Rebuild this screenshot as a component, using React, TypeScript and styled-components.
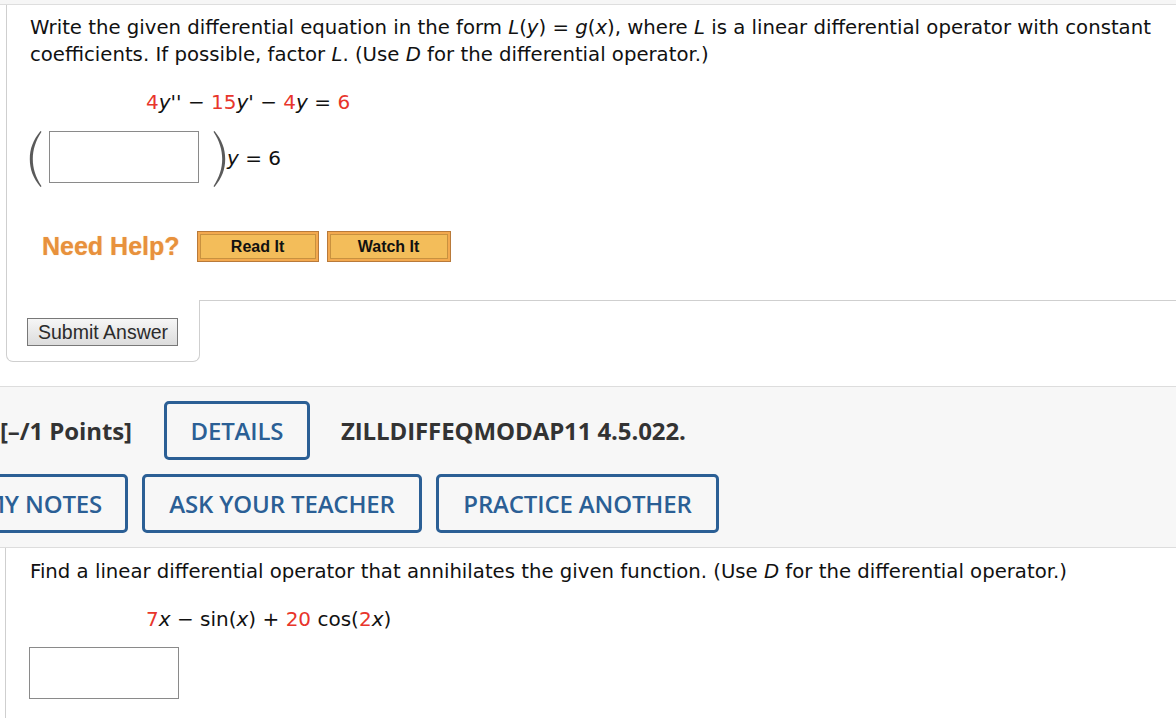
import React from "react";
import styled, { createGlobalStyle } from "styled-components";

const GlobalStyle = createGlobalStyle`
  html, body { margin: 0; padding: 0; background: #ffffff; }
  body { overflow: hidden; width: 1176px; height: 718px; }
  * { box-sizing: border-box; }
`;

const Page = styled.div`
  width: 1176px;
  height: 718px;
  overflow: hidden;
  font-family: "DejaVu Sans", Verdana, sans-serif;
  color: #111;
`;

const TopStrip = styled.div`
  height: 5px;
  background: #f6f6f6;
  border-bottom: 1px solid #dedede;
`;

const QuestionPanel = styled.div`
  margin-left: 6px;
`;

const QuestionBody = styled.div`
  border-left: 1px solid #cfcfcf;
  padding: 9px 0 38px 23px;
`;

const Prompt = styled.p`
  margin: 0;
  font-size: 19.7px;
  line-height: 27px;
`;

const Math = styled.div<{ $top: number }>`
  margin: ${(p) => p.$top}px 0 0 116px;
  font-size: 20px;
  line-height: 27px;
  white-space: pre;
`;

const Red = styled.span`
  color: #e8352b;
`;

const I = styled.i`
  font-style: italic;
`;

const AnswerRow = styled.div`
  display: flex;
  align-items: flex-start;
  height: 52px;
  margin-top: 15px;
  margin-left: -2px;
`;

const ParenSvg = styled.svg<{ $flip?: boolean; $ml?: number }>`
  width: 14px;
  height: 58px;
  margin-top: -1px;
  margin-left: ${(p) => p.$ml ?? 0}px;
  flex: none;
  transform: ${(p) => (p.$flip ? "scaleX(-1)" : "none")};
`;

const AnswerBox = styled.div<{ $ml: number; $mt?: number }>`
  width: 150px;
  height: 52px;
  margin-left: ${(p) => p.$ml}px;
  margin-top: ${(p) => p.$mt ?? 0}px;
  border: 1px solid #8a8a8a;
  background: #fff;
  flex: none;
`;

const AfterParen = styled.span`
  margin-top: 14px;
  font-size: 20px;
  line-height: 27px;
  white-space: pre;
`;

const HelpRow = styled.div`
  display: flex;
  align-items: center;
  margin-top: 48px;
  margin-left: 12px;
  height: 31px;
`;

const NeedHelp = styled.span`
  font-family: "Liberation Sans", Arial, sans-serif;
  font-weight: 700;
  font-size: 25px;
  color: #e8913c;
  text-shadow: 0 0 1px rgba(232, 145, 60, 0.6);
  margin-right: 17px;
`;

const HelpButton = styled.button<{ $w: number }>`
  width: ${(p) => p.$w}px;
  height: 31px;
  margin-right: 8px;
  padding: 0;
  border: 1px solid #b97a3a;
  background: #f0a64c;
  box-shadow: inset 0 0 0 2px #f3a94f, inset 0 0 0 3px #c8913f;
  display: flex;
  align-items: center;
  justify-content: center;
  position: relative;
  font-family: "Liberation Sans", Arial, sans-serif;
  font-weight: 700;
  font-size: 16px;
  color: #111;
  cursor: pointer;
  &::before {
    content: "";
    position: absolute;
    inset: 3px;
    background: #f3bd5a;
  }
  span { position: relative; }
`;

const Footer = styled.div`
  display: flex;
`;

const SubmitBox = styled.div`
  width: 194px;
  height: 62px;
  border: 1px solid #cfcfcf;
  border-top: none;
  border-radius: 0 0 7px 7px;
  padding: 18px 0 0 20px;
  flex: none;
`;

const Filler = styled.div`
  flex: 1;
  border-top: 1px solid #cfcfcf;
`;

const SubmitButton = styled.button`
  height: 28px;
  padding: 0 9px 0 10px;
  border: 1px solid #787878;
  background: linear-gradient(#f6f6f6, #dcdcdc);
  font-family: "Liberation Sans", Arial, sans-serif;
  font-size: 19.5px;
  color: #2b2b2b;
  line-height: 26px;
  cursor: pointer;
`;

const GraySection = styled.div`
  margin-top: 24px;
  background: #f7f7f7;
  border-top: 1px solid #dddddd;
  border-bottom: 1px solid #dddddd;
  padding: 14px 0 14px 0;
  font-family: "Open Sans", sans-serif;
`;

const ToolRow = styled.div<{ $ml: number; $mt?: number }>`
  display: flex;
  align-items: center;
  margin-left: ${(p) => p.$ml}px;
  margin-top: ${(p) => p.$mt ?? 0}px;
  gap: 14px;
`;

const BoldLabel = styled.span<{ $mr?: number; $ml?: number }>`
  font-weight: 700;
  font-size: 24px;
  color: #333;
  white-space: nowrap;
  margin-right: ${(p) => p.$mr ?? 0}px;
  margin-left: ${(p) => p.$ml ?? 0}px;
  letter-spacing: -0.1px;
`;

const OutlineButton = styled.button<{ $w: number }>`
  width: ${(p) => p.$w}px;
  height: 59px;
  flex: none;
  border: 3px solid #2b5f95;
  border-radius: 5px;
  background: transparent;
  color: #2b5f95;
  font-family: "Open Sans", sans-serif;
  font-weight: 600;
  font-size: 24px;
  letter-spacing: -0.15px;
  white-space: nowrap;
  cursor: pointer;
  padding: 0;
`;

const BottomSection = styled.div`
  margin-left: 5px;
  border-left: 1px solid #cfcfcf;
  padding: 10px 0 0 24px;
  height: 200px;
`;

export default function App() {
  const paren = (
    <path d="M12.5 1 C5 10, 1.8 19, 1.8 29 C1.8 39, 5 48, 12.5 57 L13.5 56.2 C7.5 47, 4.8 38, 4.8 29 C4.8 20, 7.5 11, 13.5 1.8 Z" fill="#5a5a5a" />
  );
  return (
    <Page>
      <GlobalStyle />
      <TopStrip />
      <QuestionPanel>
        <QuestionBody>
          <Prompt>
            Write the given differential equation in the form <I>L</I>(<I>y</I>) = <I>g</I>(<I>x</I>), where <I>L</I> is a linear differential operator with constant coefficients. If possible, factor <I>L</I>. (Use <I>D</I> for the differential operator.)
          </Prompt>
          <Math $top={21}>
            <Red>4</Red><I>y''</I> − <Red>15</Red><I>y'</I> − <Red>4</Red><I>y</I> = <Red>6</Red>
          </Math>
          <AnswerRow>
            <ParenSvg viewBox="0 0 14 58">{paren}</ParenSvg>
            <AnswerBox $ml={7} />
            <ParenSvg viewBox="0 0 14 58" $flip $ml={14}>{paren}</ParenSvg>
            <AfterParen><I>y</I> = 6</AfterParen>
          </AnswerRow>
          <HelpRow>
            <NeedHelp>Need Help?</NeedHelp>
            <HelpButton $w={122}><span>Read It</span></HelpButton>
            <HelpButton $w={124}><span>Watch It</span></HelpButton>
          </HelpRow>
        </QuestionBody>
        <Footer>
          <SubmitBox>
            <SubmitButton>Submit Answer</SubmitButton>
          </SubmitBox>
          <Filler />
        </Footer>
      </QuestionPanel>
      <GraySection>
        <ToolRow $ml={0}>
          <BoldLabel $mr={18}>[–/1 Points]</BoldLabel>
          <OutlineButton $w={146}>DETAILS</OutlineButton>
          <BoldLabel $ml={17}>ZILLDIFFEQMODAP11 4.5.022.</BoldLabel>
        </ToolRow>
        <ToolRow $ml={-43} $mt={14}>
          <OutlineButton $w={171}>MY NOTES</OutlineButton>
          <OutlineButton $w={280}>ASK YOUR TEACHER</OutlineButton>
          <OutlineButton $w={283}>PRACTICE ANOTHER</OutlineButton>
        </ToolRow>
      </GraySection>
      <BottomSection>
        <Prompt>
          Find a linear differential operator that annihilates the given function. (Use <I>D</I> for the differential operator.)
        </Prompt>
        <Math $top={21}>
          <Red>7</Red><I>x</I> − sin(<I>x</I>) + <Red>20</Red> cos(<Red>2</Red><I>x</I>)
        </Math>
        <AnswerBox $ml={-1} $mt={14} />
      </BottomSection>
    </Page>
  );
}
